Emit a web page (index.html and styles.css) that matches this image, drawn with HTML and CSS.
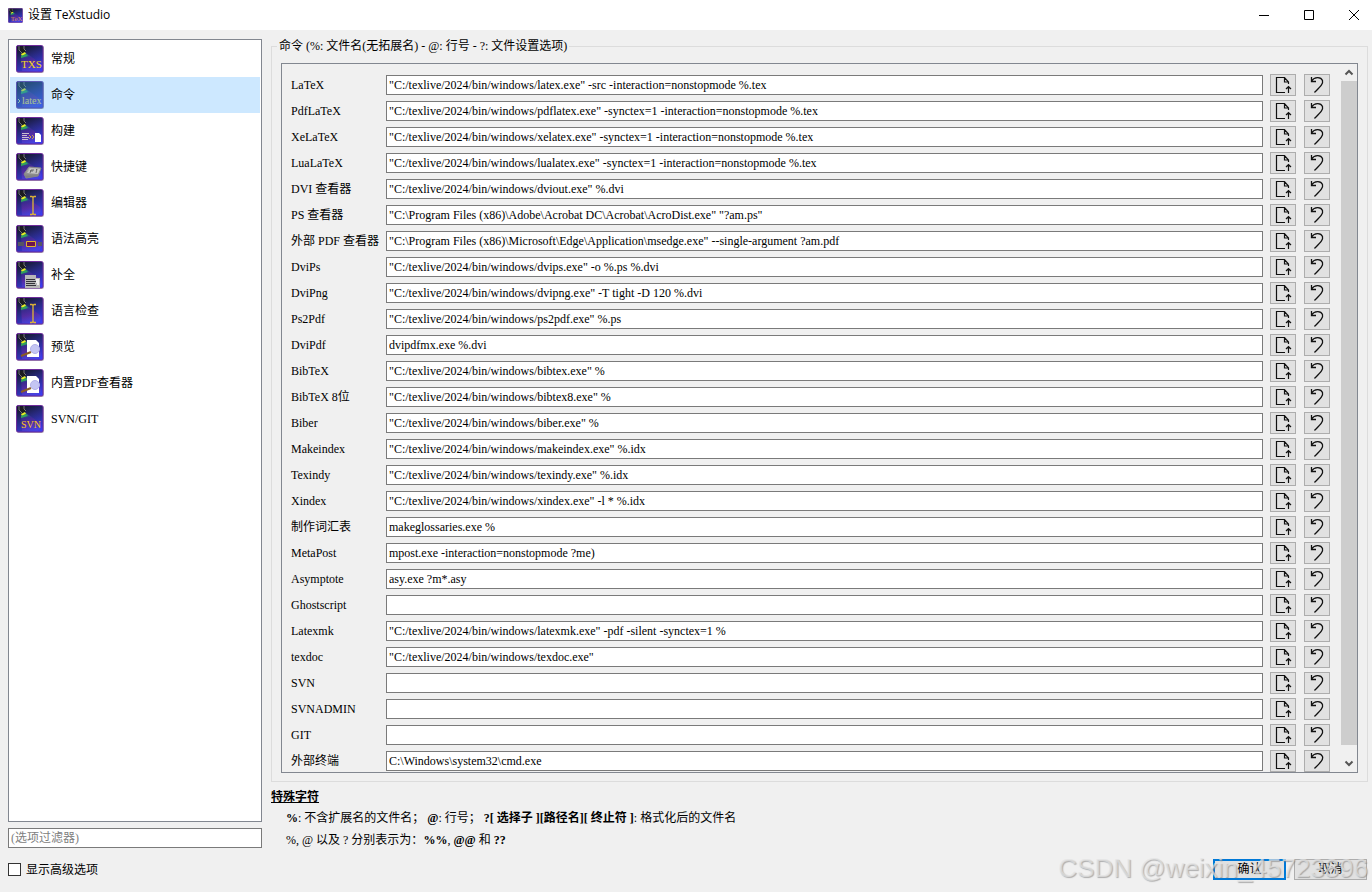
FILE: index.html
```html
<!DOCTYPE html>
<html lang="zh-CN">
<head>
<meta charset="utf-8">
<title>设置 TeXstudio</title>
<link rel="stylesheet" href="styles.css">
</head>
<body>
<svg class="defs" width="0" height="0" aria-hidden="true">
  <defs>
    <linearGradient id="night" x1="0.3" y1="0" x2="0.75" y2="1">
      <stop offset="0" stop-color="#14172c"/><stop offset="0.4" stop-color="#28297e"/><stop offset="1" stop-color="#3c3cee"/>
    </linearGradient>
    <linearGradient id="beam" x1="0.15" y1="0" x2="0.4" y2="1">
      <stop offset="0" stop-color="#2f9a40"/><stop offset="0.12" stop-color="#2468a0"/><stop offset="0.3" stop-color="#4a2a9a"/><stop offset="0.6" stop-color="#6c2aa0"/><stop offset="1" stop-color="#5148e0"/>
    </linearGradient>
    <linearGradient id="key" x1="0" y1="0" x2="0" y2="1">
      <stop offset="0" stop-color="#b8b8b8"/><stop offset="1" stop-color="#777"/>
    </linearGradient>
  </defs>
  <symbol id="base" viewBox="0 0 28 28">
    <rect x="1" y="1" width="27" height="27" rx="2" fill="#b9b5bd"/>
    <rect x="0.5" y="0.5" width="26.500" height="26.500" rx="1.500" fill="url(#night)" stroke="#6e2c9c"/>
    <path d="M5 10 10 8 24 18Q27 24 21 26H6Z" fill="url(#beam)" opacity="0.6"/>
    <path d="M4 2 3 6l3 3 4-3-2-4z" fill="#1c1c20"/>
    <path d="M3 1v4l3 3M8 1v3l2 2" fill="none" stroke="#8a8a8a" stroke-width="0.800"/>
    <path d="m5 9 4-2 1 2-4 2z" fill="#e6ed25"/>
    <path d="m5 11 5-2 2 2-7 2z" fill="#30a15a"/>
  </symbol>
  <symbol id="doc-up" viewBox="0 0 26 22">
    <path d="M15 18.500H6.500v-15h8l4 4.500v2M14.500 3.500V8h4M18.500 19v-6.500M16 15l2.500-2.500L21 15" fill="none" stroke="#111" stroke-width="1.200"/>
  </symbol>
  <symbol id="undo" viewBox="0 0 26 22">
    <path d="M7.500 3v4.500H12M7.500 7C10.500 2.500 17 2.500 18.500 6.500c1 3.500-2.500 6.500-8 12" fill="none" stroke="#111" stroke-width="1.300"/>
  </symbol>
</svg>

<header class="titlebar">
  <svg class="app-icon" viewBox="0 0 28 28"><use href="#base"/><text x="5" y="24" font-size="13" fill="#d58a62">TeX</text></svg>
  <h1>设置 TeXstudio</h1>
  <div class="window-buttons">
    <button type="button" aria-label="最小化"><svg viewBox="0 0 12 12"><path d="M1 6.500h10"/></svg></button>
    <button type="button" aria-label="最大化"><svg viewBox="0 0 12 12"><path d="M1.500 1.500h9v9h-9z"/></svg></button>
    <button type="button" aria-label="关闭"><svg viewBox="0 0 12 12"><path d="m1 1 10 10M11 1 1 11"/></svg></button>
  </div>
</header>

<main class="dialog">
  <div class="content">
    <aside class="sidebar">
      <nav class="pages">
        <a href="#general"><svg viewBox="0 0 28 28"><use href="#base"/><text x="5" y="23" font-size="11" fill="#f4d91c">TXS</text></svg>常规</a>
        <a href="#commands" class="selected" aria-current="page"><svg viewBox="0 0 28 28"><use href="#base"/><path d="m2 18 2 2-2 2" fill="none" stroke="#c5d89b"/><text x="6" y="23" font-size="10" fill="#f0e060">latex</text><rect width="28" height="28" rx="2" fill="#3a9ad8" opacity="0.4"/></svg>命令</a>
        <a href="#build"><svg viewBox="0 0 28 28"><use href="#base"/><path d="M6 16.500h7M6 18.500h5M6 20.500h7M6 22.500h6" stroke="#c9c0cf"/><path d="m13 18 2 2-2 2m3-4 2 2-2 2" fill="none" stroke="#c59a50"/><path d="M19 16h4l2 2v7h-6z" fill="#fff"/></svg>构建</a>
        <a href="#shortcuts"><svg viewBox="0 0 28 28"><use href="#base"/><path d="M8 21 13 14l12 1-3 8-12 2z" fill="url(#key)" stroke="#888"/><path d="m11 20 3-5 10 1-2 5z" fill="#c4c4c4"/><path d="m14 20 1-3h3m-4 1h3m3 2 1-4-1 1" fill="none" stroke="#555" stroke-width="0.800"/></svg>快捷键</a>
        <a href="#editor"><svg viewBox="0 0 28 28"><use href="#base"/><path d="M14 7.500h2l1 1 1-1h2M17 8v16M14 25.500h2l1-1 1 1h2" fill="none" stroke="#dfb536" stroke-width="1.300"/></svg>编辑器</a>
        <a href="#syntax"><svg viewBox="0 0 28 28"><use href="#base"/><path d="M2 17h6v4H2zm20 0h4v4h-4z" fill="#555564"/><path d="M10.500 16.500h9v5h-9z" fill="#6d144f" stroke="#e0b52b"/></svg>语法高亮</a>
        <a href="#completion"><svg viewBox="0 0 28 28"><use href="#base"/><path d="M9 14h11v3h4v10H9z" fill="#b8b8b8"/><path d="M10 18.500h9M10 20.500h11M10 22.500h9M10 24.500h10" stroke="#34343a"/><path d="M20 18h3v6h-2v-2h-1z" fill="#eee"/></svg>补全</a>
        <a href="#language"><svg viewBox="0 0 28 28"><use href="#base"/><path d="M14 7.500h2l1 1 1-1h2M17 8v16M14 25.500h2l1-1 1 1h2" fill="none" stroke="#dfb536" stroke-width="1.300"/></svg>语言检查</a>
        <a href="#preview"><svg viewBox="0 0 28 28"><use href="#base"/><path d="M11 7h9l3 3v14H11z" fill="#fff"/><path d="m5 23 10-4" stroke="#8a5b24" stroke-width="2"/><circle cx="19" cy="16" r="4.500" fill="#c4c5f3" stroke="#b3b2ea"/></svg>预览</a>
        <a href="#viewer"><svg viewBox="0 0 28 28"><use href="#base"/><path d="M11 7h9l3 3v14H11z" fill="#fff"/><path d="m5 23 10-4" stroke="#8a5b24" stroke-width="2"/><circle cx="19" cy="16" r="4.500" fill="#c4c5f3" stroke="#b3b2ea"/></svg>内置PDF查看器</a>
        <a href="#svn"><svg viewBox="0 0 28 28"><use href="#base"/><text x="5" y="23" font-size="10" fill="#f4c91c">SVN</text></svg>SVN/GIT</a>
      </nav>
      <input class="filter" type="text" placeholder="(选项过滤器)" aria-label="选项过滤器">
    </aside>

    <section class="panel">
      <fieldset class="group">
        <legend>命令 (%: 文件名(无拓展名) - @: 行号 - ?: 文件设置选项)</legend>
        <div class="scroll-area">
          <div class="rows" id="rows"></div>
          <div class="scrollbar" aria-hidden="true">
            <svg viewBox="0 0 16 16"><path d="m4.500 10 3.500-3.500 3.500 3.500"/></svg>
            <div class="track"><div class="thumb"></div></div>
            <svg viewBox="0 0 16 16"><path d="m4.500 6 3.500 3.500 3.500-3.500"/></svg>
          </div>
        </div>
      </fieldset>
      <div class="notes">
        <h2>特殊字符</h2>
        <p><b>%</b>: 不含扩展名的文件名； <b>@</b>: 行号； <b>?[ 选择子 ][路径名][ 终止符 ]</b>: 格式化后的文件名</p>
        <p>%, @ 以及 ? 分别表示为：<b>%%</b>, <b>@@</b> 和 <b>??</b></p>
      </div>
    </section>
  </div>

  <footer class="footer">
    <label class="advanced"><input type="checkbox">显示高级选项</label>
    <div class="actions">
      <button type="button" class="default">确认</button>
      <button type="button">取消</button>
      <span class="watermark">CSDN @weixin_45723896</span>
    </div>
  </footer>
</main>
<script src="script.js"></script>
</body>
</html>
```

FILE: styles.css
```css
* { box-sizing: border-box; }

body {
  margin: 0;
  height: 100vh;
  display: flex;
  flex-direction: column;
  overflow: hidden;
  background: #f0f0f0;
  color: #000;
  font: 12px/20px "Liberation Serif", "Noto Sans CJK SC", serif;
}

input, button { font: inherit; color: inherit; border-radius: 0; margin: 0; }
h1, h2, p { margin: 0; }
.defs { position: absolute; }

.titlebar {
  flex: none;
  height: 30px;
  display: flex;
  align-items: center;
  padding-left: 8px;
  background: #fff;
  font-family: "Open Sans", "Noto Sans CJK SC", sans-serif;
}
.app-icon { width: 15px; height: 15px; margin-right: 5px; font-family: "Liberation Serif", serif; }
.titlebar h1 { font-size: 12px; font-weight: 400; line-height: 20px; }
.window-buttons { display: flex; margin-left: auto; }
.window-buttons button {
  width: 45px;
  height: 30px;
  padding: 0;
  display: grid;
  place-items: center;
  border: 0;
  background: none;
}
.window-buttons button:last-child { width: 41px; padding-left: 4px; }
.window-buttons svg { width: 12px; height: 12px; fill: none; stroke: #000; }

.dialog { flex: 1; min-height: 0; display: flex; flex-direction: column; padding: 9px 4px 12px 8px; }
.content { flex: 1; min-height: 0; display: grid; grid-template-columns: 254px minmax(0, 1fr); gap: 9px; }

.sidebar { display: flex; flex-direction: column; gap: 6px; min-height: 0; padding-bottom: 2px; }
.pages { flex: 1; min-height: 0; padding: 1px; background: #fff; border: 1px solid #828790; }
.pages a {
  display: flex;
  align-items: center;
  gap: 7px;
  height: 36px;
  padding-left: 6px;
  color: inherit;
  text-decoration: none;
}
.pages svg { width: 28px; height: 28px; }
.pages .selected { background: #cde8ff; }
.filter { height: 20px; padding: 0 2px; border: 1px solid #7a7a7a; background: #fff; }
.filter::placeholder { color: #808080; }

.panel { display: flex; flex-direction: column; min-height: 0; }
.group {
  flex: 1;
  min-width: 0;
  min-height: 0;
  display: flex;
  margin: 0;
  padding: 10px 9px 8px;
  border: 1px solid #dcdcdc;
}
.group legend { height: 14px; line-height: 15px; padding: 0 2px; margin-left: -4px; }
.scroll-area { flex: 1; min-width: 0; display: flex; overflow: hidden; border: 1px solid #828790; }
.rows { flex: 1; min-width: 0; padding: 10px 11px 0 9px; overflow: hidden; }
.row {
  display: grid;
  grid-template-columns: 88px minmax(0, 1fr) 26px 27px;
  column-gap: 7px;
  align-items: center;
  height: 22px;
  margin-bottom: 4px;
}
.row label { white-space: nowrap; }
.row input { width: 100%; height: 20px; padding: 0 2px; border: 1px solid #7a7a7a; background: #fff; }
.row button { width: 26px; height: 22px; padding: 0; border: 1px solid #adadad; background: #e1e1e1; }
.row button:last-child { justify-self: end; }
.row button svg { display: block; width: 24px; height: 20px; }

.scrollbar { flex: none; width: 16px; display: flex; flex-direction: column; background: #f0f0f0; }
.scrollbar svg { flex: none; width: 16px; height: 17px; fill: none; stroke: #555; stroke-width: 2; }
.track { flex: 1; }
.thumb { height: 98.5%; background: #cdcdcd; }

.notes { display: grid; padding-top: 6px; }
.notes h2 { margin-bottom: 1px; font-size: 12px; line-height: 19px; text-decoration: underline; }
.notes p { padding-left: 15px; }
.notes p + p { margin-top: 2px; }

.footer { flex: none; display: flex; justify-content: space-between; align-items: center; margin-top: 9px; }
.advanced { display: flex; align-items: center; gap: 5px; height: 20px; }
.advanced input { appearance: none; width: 13px; height: 13px; border: 1px solid #333; background: #fff; }
.actions { position: relative; display: flex; gap: 8px; padding-right: 1px; }
.actions button { width: 73px; height: 21px; padding: 0; line-height: 17px; border: 1px solid #adadad; background: #e1e1e1; }
.actions .default { border: 2px solid #0078d7; }
.watermark {
  position: absolute;
  right: 0;
  top: -5px;
  font: 26px/28px "Liberation Sans", sans-serif;
  white-space: nowrap;
  color: rgba(228, 228, 228, 0.7);
  text-shadow: 1px 1px 1px rgba(130, 130, 130, 0.6);
  pointer-events: none;
}
```

FILE: script.js
```js
const commands = [
  ["LaTeX", '"C:/texlive/2024/bin/windows/latex.exe" -src -interaction=nonstopmode %.tex'],
  ["PdfLaTeX", '"C:/texlive/2024/bin/windows/pdflatex.exe" -synctex=1 -interaction=nonstopmode %.tex'],
  ["XeLaTeX", '"C:/texlive/2024/bin/windows/xelatex.exe" -synctex=1 -interaction=nonstopmode %.tex'],
  ["LuaLaTeX", '"C:/texlive/2024/bin/windows/lualatex.exe" -synctex=1 -interaction=nonstopmode %.tex'],
  ["DVI 查看器", '"C:/texlive/2024/bin/windows/dviout.exe" %.dvi'],
  ["PS 查看器", '"C:\\Program Files (x86)\\Adobe\\Acrobat DC\\Acrobat\\AcroDist.exe" "?am.ps"'],
  ["外部 PDF 查看器", '"C:\\Program Files (x86)\\Microsoft\\Edge\\Application\\msedge.exe" --single-argument ?am.pdf'],
  ["DviPs", '"C:/texlive/2024/bin/windows/dvips.exe" -o %.ps %.dvi'],
  ["DviPng", '"C:/texlive/2024/bin/windows/dvipng.exe" -T tight -D 120 %.dvi'],
  ["Ps2Pdf", '"C:/texlive/2024/bin/windows/ps2pdf.exe" %.ps'],
  ["DviPdf", "dvipdfmx.exe %.dvi"],
  ["BibTeX", '"C:/texlive/2024/bin/windows/bibtex.exe" %'],
  ["BibTeX 8位", '"C:/texlive/2024/bin/windows/bibtex8.exe" %'],
  ["Biber", '"C:/texlive/2024/bin/windows/biber.exe" %'],
  ["Makeindex", '"C:/texlive/2024/bin/windows/makeindex.exe" %.idx'],
  ["Texindy", '"C:/texlive/2024/bin/windows/texindy.exe" %.idx'],
  ["Xindex", '"C:/texlive/2024/bin/windows/xindex.exe" -l * %.idx'],
  ["制作词汇表", "makeglossaries.exe %"],
  ["MetaPost", "mpost.exe -interaction=nonstopmode ?me)"],
  ["Asymptote", "asy.exe ?m*.asy"],
  ["Ghostscript", ""],
  ["Latexmk", '"C:/texlive/2024/bin/windows/latexmk.exe" -pdf -silent -synctex=1 %'],
  ["texdoc", '"C:/texlive/2024/bin/windows/texdoc.exe"'],
  ["SVN", ""],
  ["SVNADMIN", ""],
  ["GIT", ""],
  ["外部终端", "C:\\Windows\\system32\\cmd.exe"]
];

const rows = document.getElementById("rows");
commands.forEach(([name, value], i) => {
  const row = document.createElement("div");
  row.className = "row";
  row.innerHTML = `
    <label for="cmd${i}">${name}</label>
    <input type="text" id="cmd${i}">
    <button type="button" aria-label="选择文件"><svg viewBox="1 1 24 20"><use href="#doc-up" width="26" height="22"/></svg></button>
    <button type="button" aria-label="恢复默认"><svg viewBox="1 1 24 20"><use href="#undo" width="26" height="22"/></svg></button>`;
  row.querySelector("input").value = value;
  rows.append(row);
});
```
